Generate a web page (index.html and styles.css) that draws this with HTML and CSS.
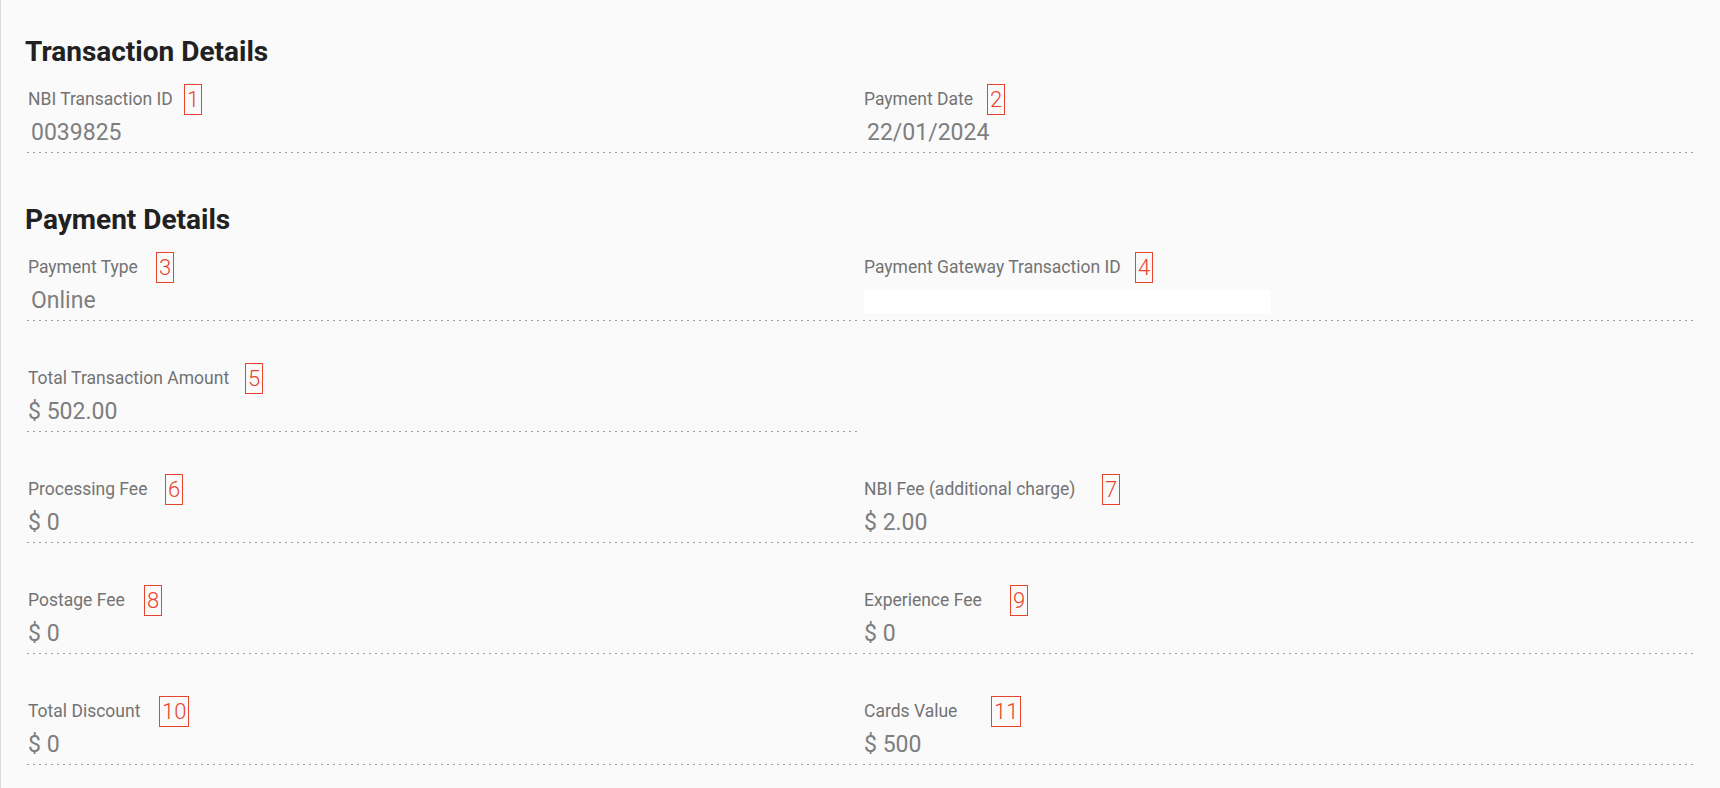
FILE: index.html
```html
<!DOCTYPE html>
<html lang="en">
<head>
<meta charset="utf-8">
<title>Transaction Details</title>
<link rel="stylesheet" href="styles.css">
</head>
<body>
<div class="page">
  <section class="section">
    <h2 class="title">Transaction Details</h2>
    <div class="grid">
      <div class="field">
        <div class="label">NBI Transaction ID</div>
        <span class="tag t1">1</span>
        <div class="value pad">0039825</div>
      </div>
      <div class="field">
        <div class="label">Payment Date</div>
        <span class="tag t2">2</span>
        <div class="value pad">22/01/2024</div>
      </div>
    </div>
  </section>

  <section class="section">
    <h2 class="title">Payment Details</h2>
    <div class="grid">
      <div class="field">
        <div class="label">Payment Type</div>
        <span class="tag t3">3</span>
        <div class="value pad">Online</div>
      </div>
      <div class="field">
        <div class="label">Payment Gateway Transaction ID</div>
        <span class="tag t4">4</span>
        <div class="value blank"><span class="blank-box"></span></div>
      </div>
      <div class="field">
        <div class="label">Total Transaction Amount</div>
        <span class="tag t5">5</span>
        <div class="value">$ 502.00</div>
      </div>
      <div class="cell-empty"></div>
      <div class="field">
        <div class="label">Processing Fee</div>
        <span class="tag t6">6</span>
        <div class="value">$ 0</div>
      </div>
      <div class="field">
        <div class="label">NBI Fee (additional charge)</div>
        <span class="tag t7">7</span>
        <div class="value">$ 2.00</div>
      </div>
      <div class="field">
        <div class="label">Postage Fee</div>
        <span class="tag t8">8</span>
        <div class="value">$ 0</div>
      </div>
      <div class="field">
        <div class="label">Experience Fee</div>
        <span class="tag t9">9</span>
        <div class="value">$ 0</div>
      </div>
      <div class="field">
        <div class="label">Total Discount</div>
        <span class="tag t10">10</span>
        <div class="value">$ 0</div>
      </div>
      <div class="field">
        <div class="label">Cards Value</div>
        <span class="tag t11">11</span>
        <div class="value">$ 500</div>
      </div>
    </div>
  </section>
</div>
</body>
</html>
```
FILE: styles.css
```css
html, body {
  margin: 0;
  padding: 0;
  background: #fafafa;
}

body {
  font-family: Roboto, "Liberation Sans", Arial, sans-serif;
}

.page {
  box-sizing: border-box;
  min-height: 788px;
  border-left: 1px solid #d9d9d9;
  padding: 35px 27px 0 26px;
}

.section + .section {
  margin-top: 50px;
}

.title {
  margin: 0 0 19px -2px;
  font-size: 28px;
  line-height: 34px;
  font-weight: 700;
  color: #212121;
}

.grid {
  display: grid;
  grid-template-columns: 1fr 1fr;
  column-gap: 6px;
  row-gap: 46px;
}

.field {
  position: relative;
  padding: 0 0 6px 1px;
  background-image: repeating-linear-gradient(90deg, #a0a0a0 0 2px, transparent 2px 6px);
  background-size: 100% 1px;
  background-repeat: no-repeat;
  background-position: left bottom;
}

.label {
  font-size: 17.5px;
  line-height: 22px;
  color: #737373;
}

.value {
  margin-top: 9px;
  font-size: 23px;
  line-height: 28px;
  color: #7e7e7e;
}

.pad {
  padding-left: 3px;
}

.blank {
  display: flex;
  align-items: center;
  height: 28px;
}

.blank-box {
  display: block;
  width: 407px;
  height: 23px;
  background: #ffffff;
}

.tag {
  position: absolute;
  top: -4px;
  border: 1px solid #e8442d;
  color: #e8442d;
  font-size: 22px;
  font-weight: 300;
  line-height: 29px;
  padding: 0 2px;
}

.t1 { left: 157px; }
.t2 { left: 124px; }
.t3 { left: 129px; }
.t4 { left: 272px; }
.t5 { left: 218px; }
.t6 { left: 138px; }
.t7 { left: 239px; }
.t8 { left: 117px; }
.t9 { left: 147px; }
.t10 { left: 132px; }
.t11 { left: 128px; }
```
